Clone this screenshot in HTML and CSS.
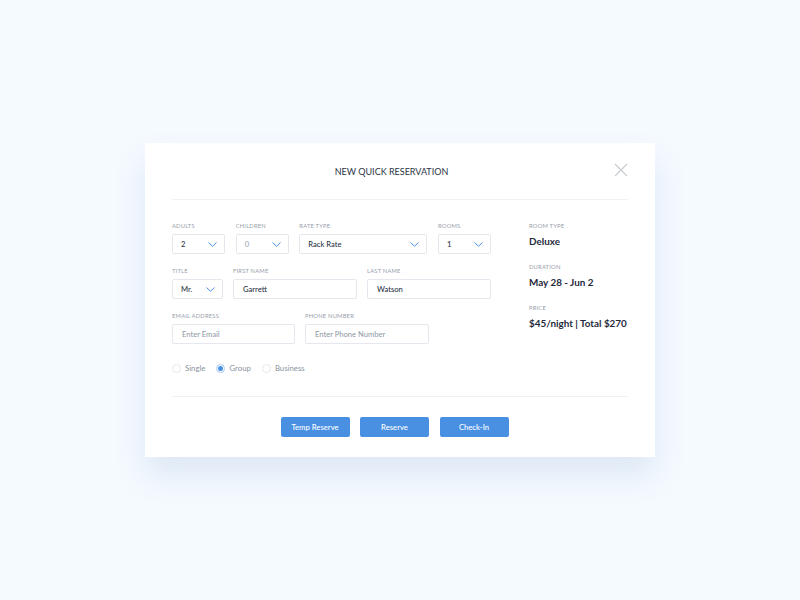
FILE: index.html
```html
<!DOCTYPE html>
<html lang="en">
    <head>
        <meta charset="UTF-8" />
        <meta name="viewport" content="width=device-width, initial-scale=1.0" />
        <title>New Quick Reservation</title>
        <link rel="stylesheet" href="styles.css">
    </head>

    <body>
        <section class="modal">
            <div class="head">
                <h2 class="title">NEW QUICK RESERVATION</h2>
                <span class="close">
                    <svg width="14" height="14" viewBox="0 0 14 14"><path d="M1 1 L13 13 M13 1 L1 13" stroke="#c9cdd3" stroke-width="1.3" fill="none"/></svg>
                </span>
            </div>

            <div class="body">
                <div class="form">
                    <div class="row row-1">
                        <div class="field">
                            <label>ADULTS</label>
                            <div class="box select">2<svg class="arrow" width="9" height="5" viewBox="0 0 9 5"><path d="M0.5 0.5 L4.5 4.3 L8.5 0.5" stroke="#4a90e2" stroke-width="1" fill="none"/></svg></div>
                        </div>
                        <div class="field">
                            <label>CHILDREN</label>
                            <div class="box select muted">0<svg class="arrow" width="9" height="5" viewBox="0 0 9 5"><path d="M0.5 0.5 L4.5 4.3 L8.5 0.5" stroke="#4a90e2" stroke-width="1" fill="none"/></svg></div>
                        </div>
                        <div class="field">
                            <label>RATE TYPE</label>
                            <div class="box select">Rack Rate<svg class="arrow" width="9" height="5" viewBox="0 0 9 5"><path d="M0.5 0.5 L4.5 4.3 L8.5 0.5" stroke="#4a90e2" stroke-width="1" fill="none"/></svg></div>
                        </div>
                        <div class="field">
                            <label>ROOMS</label>
                            <div class="box select">1<svg class="arrow" width="9" height="5" viewBox="0 0 9 5"><path d="M0.5 0.5 L4.5 4.3 L8.5 0.5" stroke="#4a90e2" stroke-width="1" fill="none"/></svg></div>
                        </div>
                    </div>
                    <div class="row row-2">
                        <div class="field">
                            <label>TITLE</label>
                            <div class="box select">Mr.<svg class="arrow" width="9" height="5" viewBox="0 0 9 5"><path d="M0.5 0.5 L4.5 4.3 L8.5 0.5" stroke="#4a90e2" stroke-width="1" fill="none"/></svg></div>
                        </div>
                        <div class="field">
                            <label>FIRST NAME</label>
                            <div class="box">Garrett</div>
                        </div>
                        <div class="field">
                            <label>LAST NAME</label>
                            <div class="box">Watson</div>
                        </div>
                    </div>
                    <div class="row row-3">
                        <div class="field">
                            <label>EMAIL ADDRESS</label>
                            <div class="box placeholder">Enter Email</div>
                        </div>
                        <div class="field">
                            <label>PHONE NUMBER</label>
                            <div class="box placeholder">Enter Phone Number</div>
                        </div>
                    </div>
                    <ul class="radios">
                        <li><span class="dot"></span>Single</li>
                        <li><span class="dot on"></span>Group</li>
                        <li><span class="dot"></span>Business</li>
                    </ul>
                </div>

                <div class="info">
                    <div class="item">
                        <div class="label">ROOM TYPE</div>
                        <div class="value">Deluxe</div>
                    </div>
                    <div class="item">
                        <div class="label">DURATION</div>
                        <div class="value">May 28 - Jun 2</div>
                    </div>
                    <div class="item">
                        <div class="label">PRICE</div>
                        <div class="value">$45/night | Total $270</div>
                    </div>
                </div>
            </div>

            <div class="foot">
                <button class="btn">Temp Reserve</button>
                <button class="btn">Reserve</button>
                <button class="btn">Check-In</button>
            </div>
        </section>
    </body>
</html>
```

FILE: styles.css
```css
* {
    margin: 0;
    padding: 0;
    box-sizing: border-box;
}

body {
    font-family: "Lato", "Open Sans", "Liberation Sans", sans-serif;
    background: #f5faff;
    min-height: 100vh;
    display: flex;
    align-items: center;
    justify-content: center;
}

li {
    list-style-type: none;
}

.modal {
    width: 510px;
    padding: 0 27px;
    background: #fff;
    box-shadow: 0 18px 30px rgba(60, 110, 170, 0.13);
}

.head {
    position: relative;
    height: 57px;
    padding-right: 17px;
    display: flex;
    align-items: center;
    justify-content: center;
    border-bottom: 1px solid #eef2f6;
}

.head .title {
    font-size: 9px;
    font-weight: 400;
    color: #2b3445;
}

.head .close {
    position: absolute;
    right: 0;
    top: 20px;
    width: 14px;
    height: 14px;
}

.close svg {
    display: block;
}

.body {
    display: flex;
    padding: 22px 0 24px;
    border-bottom: 1px solid #eef2f6;
}

.form {
    width: 319px;
}

.row {
    display: flex;
    gap: 10px;
    margin-bottom: 13px;
}

.row-1 {
    gap: 10.7px;
}

.row-1 .field:nth-child(1),
.row-1 .field:nth-child(2),
.row-1 .field:nth-child(4) {
    width: 53px;
}

.row-1 .field:nth-child(3) {
    width: 128px;
}

.row-2 .field:nth-child(1) {
    width: 51px;
}

.row-2 .field:nth-child(2),
.row-2 .field:nth-child(3) {
    width: 124px;
}

.row-3 .field:nth-child(1) {
    width: 123px;
}

.row-3 .field:nth-child(2) {
    width: 124px;
}

.field label,
.info .label {
    display: block;
    height: 8px;
    line-height: 8px;
    font-size: 5.8px;
    letter-spacing: 0.2px;
    color: #98a0ab;
}

.field label {
    margin-bottom: 4px;
}

.box {
    position: relative;
    height: 20px;
    line-height: 18px;
    padding: 0 9px;
    border: 1px solid #e4e8ee;
    border-radius: 2px;
    font-size: 7.6px;
    font-weight: 500;
    color: #2b3445;
}

.box.select {
    padding-left: 8px;
}

.box.muted {
    color: #a3abb5;
}

.box.placeholder {
    color: #8e97a3;
    font-weight: 400;
}

.arrow {
    position: absolute;
    right: 7px;
    top: 7px;
    display: block;
}

.radios {
    display: flex;
    gap: 11px;
    margin-top: 20px;
    height: 8px;
    align-items: center;
}

.radios li {
    display: flex;
    align-items: center;
    font-size: 7.8px;
    color: #8a93a0;
}

.radios .dot {
    width: 9px;
    height: 9px;
    margin-right: 4px;
    border: 1px solid #e3e8ee;
    border-radius: 50%;
}

.radios .dot.on {
    border-color: #cfe0f6;
    background: #4a90e2;
    box-shadow: inset 0 0 0 1px #fff;
}

.info {
    margin-left: auto;
    width: 99px;
}

.info .item {
    margin-bottom: 15px;
}

.info .label {
    margin-bottom: 4px;
}

.info .value {
    height: 14px;
    line-height: 14px;
    font-size: 9.9px;
    font-weight: 700;
    color: #1f2a3c;
    white-space: nowrap;
}

.foot {
    display: flex;
    justify-content: center;
    gap: 10.5px;
    padding: 20px 11px 20px 0;
}

.btn {
    width: 69px;
    height: 20px;
    border: none;
    border-radius: 2px;
    background: #4a90e2;
    color: #fff;
    font-family: inherit;
    font-size: 7.7px;
    font-weight: 500;
}
```
